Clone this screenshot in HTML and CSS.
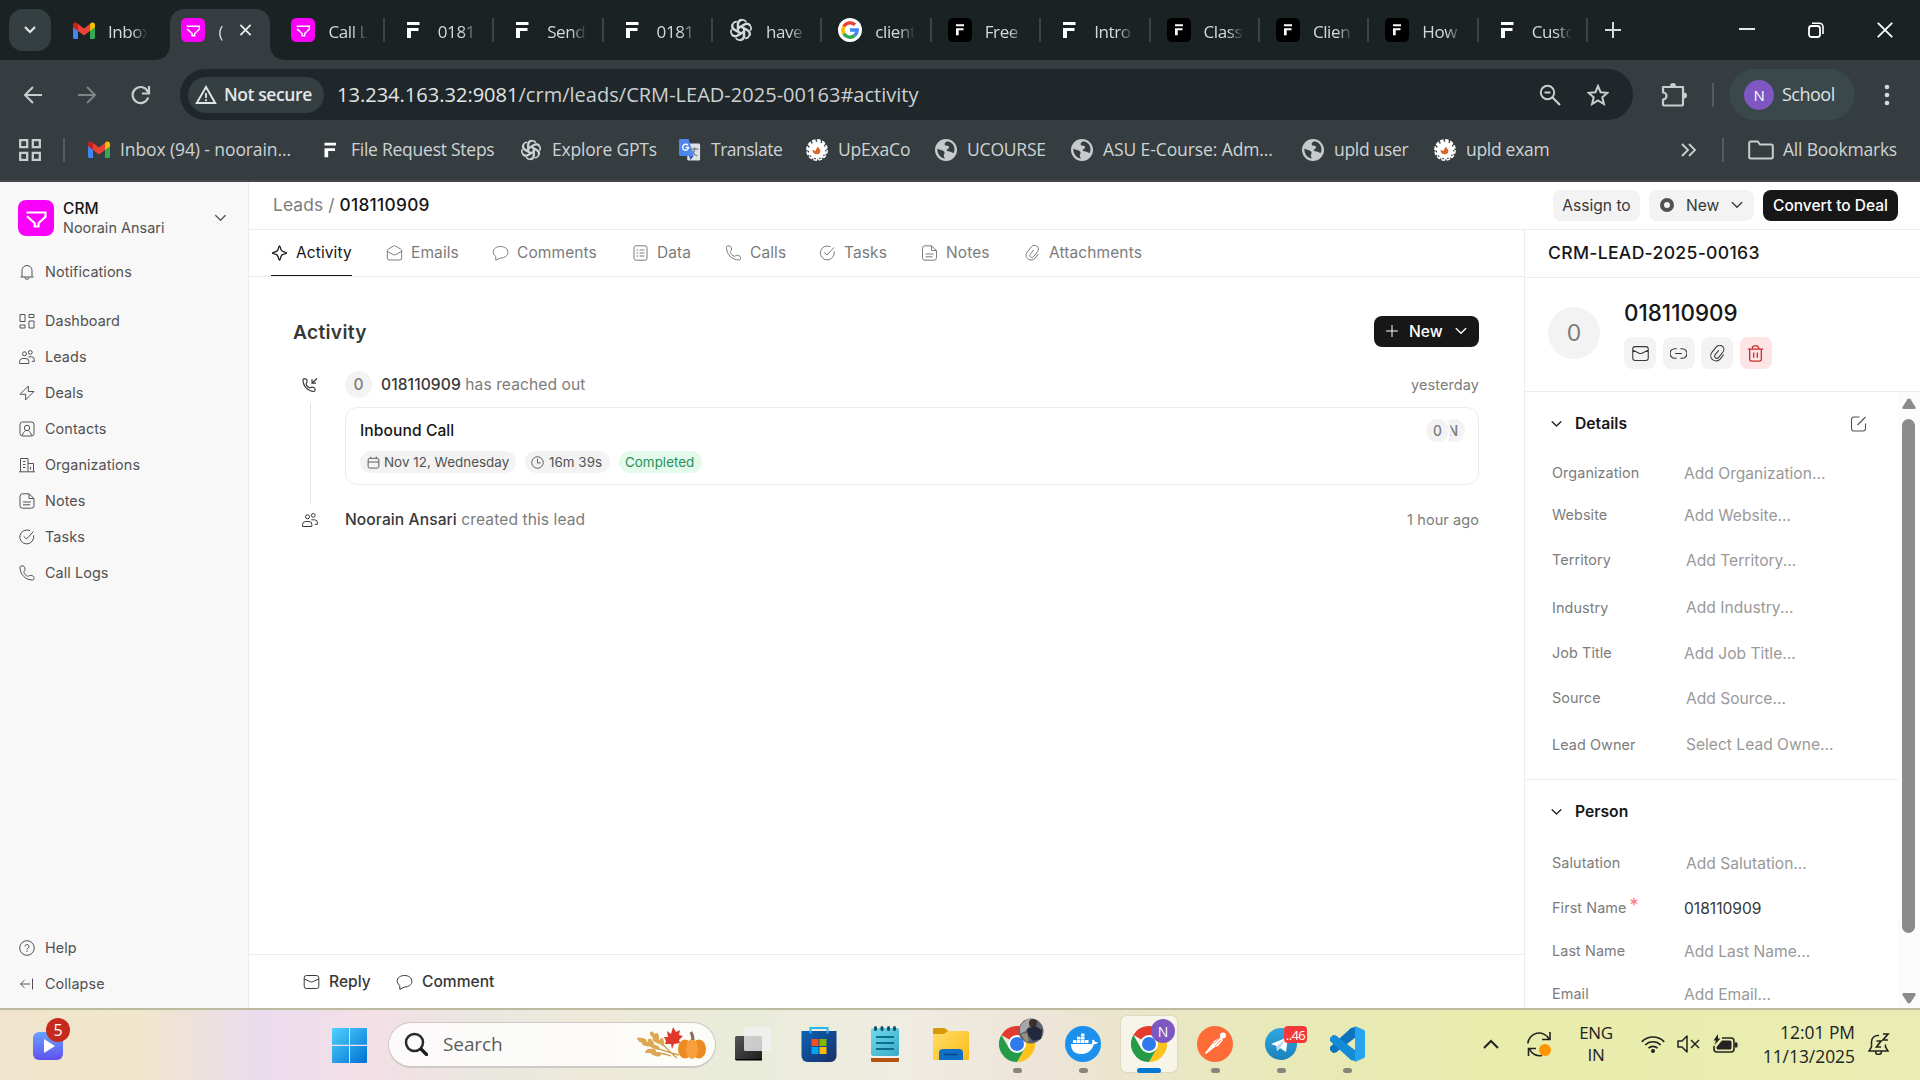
FILE: index.html
```html
<!DOCTYPE html>
<html lang="en">
<head>
<meta charset="utf-8">
<title>018110909 - Lead</title>
<link rel="stylesheet" href="styles.css">
</head>
<body>
<svg class="defs" width="0" height="0" aria-hidden="true">
  <defs>
    <linearGradient id="win" x1="0" y1="0" x2="1" y2="1"><stop offset="0" stop-color="#4fd2ff"/><stop offset="1" stop-color="#0070d2"/></linearGradient>
    <linearGradient id="vid" x1="0" y1="0" x2="0" y2="1"><stop offset="0" stop-color="#6aa2ff"/><stop offset="1" stop-color="#6050ee"/></linearGradient>
    <linearGradient id="store-g" x1="0" y1="0" x2="1" y2="1"><stop offset="0" stop-color="#0a63b8"/><stop offset="1" stop-color="#1b2f66"/></linearGradient>
    <linearGradient id="note-g" x1="0" y1="0" x2="1" y2="1"><stop offset="0" stop-color="#6fdcea"/><stop offset="1" stop-color="#38a9c9"/></linearGradient>
    <linearGradient id="fold-g" x1="0" y1="0" x2="1" y2="1"><stop offset="0" stop-color="#ffdf6b"/><stop offset="1" stop-color="#fcb813"/></linearGradient>
    <linearGradient id="tg-g" x1="0" y1="0" x2="0" y2="1"><stop offset="0" stop-color="#2fa9e0"/><stop offset="1" stop-color="#1b80bb"/></linearGradient>
    <linearGradient id="dark-g" x1="0" y1="0" x2="1" y2="1"><stop offset="0" stop-color="#555"/><stop offset="1" stop-color="#1d1d1d"/></linearGradient>
  </defs>
  <symbol id="gmail" viewBox="0 0 22 17"><path fill="#4285f4" d="M0 3v12.5A1.5 1.5 0 0 0 1.5 17H5V7z"/><path fill="#34a853" d="M22 3v12.500A1.500 1.500 0 0 1 20.500 17H17V7z"/><path fill="#fbbc04" d="M17 2v7l5-3.800V3c0-2.600-3-3.600-5-1z"/><path fill="#c5221f" d="M0 3v2.200L5 9V2C3-.6 0 .4 0 3z"/><path fill="#ea4335" d="M5 9V2l6 4.600L17 2v7l-6 4.600z"/></symbol>
  <symbol id="crm" viewBox="0 0 36 36"><rect width="36" height="36" rx="8" fill="#f900f9"/><path d="M8.500 12.500h19v4.300l-7 6.400v3.300h-3.800v-3.300L9 16.300" fill="none" stroke="#fff" stroke-width="2.200"/></symbol>
  <symbol id="frappe" viewBox="0 0 24 24"><path fill="#fff" d="M6 4h12.500v3H6zM6 10h11.500v3H10v7H6z"/></symbol>
  <symbol id="frappeb" viewBox="0 0 24 24"><rect width="24" height="24" rx="5" fill="#000"/><path fill="#fff" d="M8 6.200h8v2H8zM8 10.300h7.500v2h-4.800v5H8z"/></symbol>
  <symbol id="gpt" viewBox="0 0 24 24"><g fill="none" stroke="currentColor" stroke-width="1.700"><g id="petal"><path d="M9.300 13.500V6.200a4.200 4.200 0 0 1 7.900-2"/><path d="M9.300 9.600l6.400-3.700a4.200 4.200 0 0 1 5.600 1.600"/></g><use href="#petal" transform="rotate(60 12 12)"/><use href="#petal" transform="rotate(120 12 12)"/><use href="#petal" transform="rotate(180 12 12)"/><use href="#petal" transform="rotate(240 12 12)"/><use href="#petal" transform="rotate(300 12 12)"/></g></symbol>
  <symbol id="google" viewBox="0 0 24 24"><circle cx="12" cy="12" r="12" fill="#fff"/><g fill="none" stroke-width="3.400"><path stroke="#ea4335" d="M5.800 8.500A7.200 7.200 0 0 1 17 6.800"/><path stroke="#fbbc05" d="M5.800 15.500a7.200 7.200 0 0 1 0-7"/><path stroke="#34a853" d="M16.800 17.400A7.200 7.200 0 0 1 5.800 15.500"/><path stroke="#4285f4" d="M12 12h7.200a7.200 7.200 0 0 1-2.500 5.400"/></g></symbol>
  <symbol id="globe" viewBox="0 0 22 22"><circle cx="11" cy="11" r="11" fill="#c7cacc"/><path fill="#353d40" d="M12.500 2.300c-2 .8-3.500 2.200-2.600 3.700 1.400 1.300 4.200.2 4.200 2.300 0 1.900-2.300 1.500-2.600 3.200 2.100 1.500 4.600.7 5.800 2.100 1.300 1.600 2.100-.8 2.200-3.400C19.300 6.200 17 3.300 12.500 2.300zM2.400 9.500c2.300 1.900 5 1.300 6.700 2.900 1.500 1.700-.7 3.200-.2 4.900.2 1.100.9 1.800 1.600 2.300C6 19.300 2 15.600 2.400 9.500z"/></symbol>
  <symbol id="translate" viewBox="0 0 24 24"><rect x="9" y="5" width="14" height="18.500" rx="1.500" fill="#dfe2e5"/><path d="M13 11h8M17 9v2c0 3-2 5.500-4.500 7M14.500 13c1 2.500 3 4.500 5.500 5.500" stroke="#6f7b82" stroke-width="1.300" fill="none"/><path fill="#4e88ee" d="M1.500 0h9l5.500 18.500H1.500A1.500 1.500 0 0 1 0 17V1.500A1.500 1.500 0 0 1 1.500 0z"/><path d="M11 18.500h5L12.500 23z" fill="#3558a8"/><path d="M9.700 6.800A3.300 3.300 0 1 0 10.500 9.300H7.300" stroke="#fff" stroke-width="1.500" fill="none"/></symbol>
  <symbol id="upexa" viewBox="0 0 22 22"><circle cx="11" cy="11" r="9.600" fill="#fff"/><circle cx="11" cy="11" r="9.600" fill="none" stroke="#fff" stroke-width="2.600" stroke-dasharray="3.500 1.500"/><circle cx="11" cy="11" r="8.800" fill="none" stroke="#222" stroke-width="1.200" stroke-dasharray="1.500 3.500"/><path fill="#d9672b" d="M6.500 11c1.800 0 2.300 1 3.300 1 0-1.600.7-2.800 2.400-4.400 0 1.700 2.500 2.500 2.100 4.900-.4 2-1.700 2.800-3.400 2.800-2.400 0-4.400-1.600-4.400-4.300z"/></symbol>
  <symbol id="chev" viewBox="0 0 12 8"><path d="M1.200 1.500L6 6.200l4.800-4.700" fill="none" stroke="currentColor" stroke-width="1.300" stroke-linecap="round" stroke-linejoin="round"/></symbol>
  <symbol id="bell" viewBox="0 0 16 16"><path d="M1.500 13h13M3 13V6.500a5 5 0 0 1 10 0V13M6 13.300a2 2 0 0 0 4 0" fill="none" stroke="currentColor"/></symbol>
  <symbol id="dash" viewBox="0 0 16 16"><path d="M1 1.500h5v7H1zM10 1.500h5v3h-5zM10 8h5v7h-5zM1 12h5v3H1z" fill="none" stroke="currentColor"/></symbol>
  <symbol id="people" viewBox="0 0 16 16"><g fill="none" stroke="currentColor"><circle cx="5.500" cy="4.800" r="2"/><circle cx="11.300" cy="3.400" r="1.900"/><path d="M.6 14.500v-2A3 3 0 0 1 3.600 9.500h3.300a3 3 0 0 1 3 3v2zM9.300 7.800h3.200a2.900 2.900 0 0 1 2.900 2.900v1.600h-2.600"/></g></symbol>
  <symbol id="bolt" viewBox="0 0 16 16"><path d="M9.300 1L1 9.300h5.800L6.500 15 15 6.500H9.300z" fill="none" stroke="currentColor" stroke-linejoin="round"/></symbol>
  <symbol id="contact" viewBox="0 0 16 16"><g fill="none" stroke="currentColor"><rect x="1" y="1" width="14" height="14" rx="2.500"/><circle cx="8" cy="7" r="2.700"/><path d="M3.500 14.500c.3-2.300 1.400-3.700 3-4.700M12.500 14.500c-.3-2.300-1.400-3.700-3-4.700"/></g></symbol>
  <symbol id="org" viewBox="0 0 16 16"><path d="M0 14.800h16M1.500 14.500v-13H9v13M9 6.500h5.500v8M4 4.500h2.500M4 7.500h2.500M4 10.500h2.500M11.500 10v2.500" fill="none" stroke="currentColor"/></symbol>
  <symbol id="note" viewBox="0 0 16 16"><path d="M10 .8H3.500a2.500 2.500 0 0 0-2.500 2.500v9.400a2.500 2.500 0 0 0 2.500 2.500h9a2.500 2.500 0 0 0 2.500-2.500V5.500zM10 1v4.500h5M4 9h8M4 11.800h7" fill="none" stroke="currentColor"/></symbol>
  <symbol id="task" viewBox="0 0 16 16"><path d="M14.700 6.700A7 7 0 1 1 10.600 1.500M5 7.700L7.600 10l6.600-7.300" fill="none" stroke="currentColor" stroke-linecap="round"/></symbol>
  <symbol id="phone" viewBox="0 0 16 16"><path d="M2 1h2.200c1.600 0 2 3 1.700 4.200-.3.900-1.200 1.300-1 2.200.5 1.700 2 3.200 3.700 3.800.9.300 1.500-.7 2.400-.8 1.400-.2 4 .6 4 2v1.400c0 .8-.6 1.200-1.400 1.200C6.500 15 1 9.500 1 2.500 1 1.600 1.200 1 2 1z" fill="none" stroke="currentColor"/></symbol>
  <symbol id="callin" viewBox="0 0 16 16"><path d="M1.800 1.800h1.700c1.400 0 1.700 2.500 1.400 3.500-.2.800-1 1.100-.8 1.900.5 1.600 2 3 3.500 3.600.8.200 1.300-.6 2-.7 1.300-.2 3.400.5 3.400 1.700v1.200c0 .9-.5 1.500-1.300 1.500C6.500 14.500 1 9.500 1 3c0-.7.200-1.200.8-1.200zM15 1.500l-5 4.700M10 2.200v4h4" fill="none" stroke="currentColor" stroke-width="1.200"/></symbol>
  <symbol id="help" viewBox="0 0 16 16"><g fill="none" stroke="currentColor"><circle cx="8" cy="8" r="7.300"/><path d="M6 6.500a2 2 0 1 1 3 1.700c-.7.400-1 .7-1 1.500M8 10.800v1.200"/></g></symbol>
  <symbol id="collapse" viewBox="0 0 16 16"><path d="M13.500 2.500v11M11 8H1.500M5.500 4.200L1.500 8l4 3.800" fill="none" stroke="currentColor"/></symbol>
  <symbol id="spark" viewBox="0 0 16 16"><path d="M8 .9c.9 0 1 4 2.200 4.900S15.100 7.100 15.100 8s-3.700 1-4.900 2.200S8.900 15.100 8 15.100s-1-3.700-2.200-4.900S.9 8.900.9 8s3.700-1 4.900-2.200S7.100.9 8 .9z" fill="none" stroke="currentColor" stroke-width="1.300"/></symbol>
  <symbol id="mailopen" viewBox="0 0 16 16"><path d="M.8 6c0-1 .4-1.500 1.200-2l4.500-2.700c1-.6 2-.6 3 0L14 4c.8.500 1.200 1 1.200 2v7a2 2 0 0 1-2 2H2.800a2 2 0 0 1-2-2zM1 6.500l5.500 3c1 .5 2 .5 3 0l5.500-3" fill="none" stroke="currentColor"/></symbol>
  <symbol id="mail" viewBox="0 0 16 16"><path d="M3 1.500h10a2.300 2.300 0 0 1 2.300 2.300v8.400a2.300 2.300 0 0 1-2.300 2.300H3A2.300 2.300 0 0 1 .7 12.200V3.800A2.300 2.300 0 0 1 3 1.500zM.9 5l5.800 2.700c.9.400 1.700.4 2.600 0L15.100 5" fill="none" stroke="currentColor"/></symbol>
  <symbol id="comment" viewBox="0 0 16 16"><path d="M3.300 11.500A6 6 0 0 1 .6 7.300C.6 4 3.700 1.500 8 1.500s7.400 2.500 7.400 5.800S12.300 13 8 13L3.300 15.300z" fill="none" stroke="currentColor" stroke-linejoin="round"/></symbol>
  <symbol id="data" viewBox="0 0 16 16"><path d="M3.500.8h9a2 2 0 0 1 2 2v10.400a2 2 0 0 1-2 2h-9a2 2 0 0 1-2-2V2.800a2 2 0 0 1 2-2zM4 5h1.500M4 8h1.500M4 11h1.500M7 5h5M7 8h5M7 11h5" fill="none" stroke="currentColor"/></symbol>
  <symbol id="clip" viewBox="0 0 16 16"><path d="M13.500 9.300l-3 4C9 15.200 6 15.600 3.700 14 1.400 12.300 1 9.300 2.700 7l4-5c1.500-1.800 4-2.100 5.700-.9 1.700 1.300 2 3.700.7 5.500l-4 5c-.8 1-2 1.200-3 .5s-1.100-2-.3-3L9 5.300" fill="none" stroke="currentColor" stroke-linecap="round"/></symbol>
  <symbol id="link" viewBox="0 0 18 16"><path d="M7 3H5a5 5 0 0 0 0 10h2M11 3h2a5 5 0 0 1 0 10h-2M5.500 8h7" fill="none" stroke="currentColor" stroke-width="1.200"/></symbol>
  <symbol id="trash" viewBox="0 0 16 16"><path d="M.8 3.800h14.400M2.500 3.800v9.400a2 2 0 0 0 2 2h7a2 2 0 0 0 2-2V3.800M5 3.500C5 1.500 6 .8 7 .8h2c1 0 2 .7 2 2.700M6.300 7v5M9.700 7v5" fill="none" stroke="currentColor" stroke-width="1.200"/></symbol>
  <symbol id="edit" viewBox="0 0 16 16"><path d="M9 1H3.500A2.500 2.500 0 0 0 1 3.500v9A2.500 2.500 0 0 0 3.500 15h9a2.500 2.500 0 0 0 2.500-2.500V7.500M7 9l8-8" fill="none" stroke="currentColor" stroke-width="1.100"/></symbol>
  <symbol id="cal" viewBox="0 0 14 14"><path d="M3 2.500h8A1.800 1.800 0 0 1 12.800 4.300v6.900A1.800 1.800 0 0 1 11 13H3a1.800 1.800 0 0 1-1.800-1.800V4.300A1.800 1.800 0 0 1 3 2.500zM1.200 6.500h11.600M4 .8v2M10 .8v2" fill="none" stroke="currentColor"/></symbol>
  <symbol id="clock" viewBox="0 0 14 14"><path d="M7 3v4.500h3.500" fill="none" stroke="currentColor"/><circle cx="7" cy="7" r="6.200" fill="none" stroke="currentColor"/></symbol>
  <symbol id="chrome" viewBox="0 0 36 36"><path fill="#e33b2e" d="M18 18L2.400 9A18 18 0 0 1 33.600 9z"/><path fill="#fcc31e" d="M18 9h15.600A18 18 0 0 1 18 36l7.800-13.500z"/><path fill="#259a47" d="M2.400 9A18 18 0 0 0 18 36l7.800-13.500L18 25l-7.800-2.500z"/><circle cx="18" cy="18" r="9" fill="#fff"/><circle cx="18" cy="18" r="7" fill="#2f7bee"/></symbol>
</svg>

<div class="screen">
  <header class="browser">
    <div class="tabstrip">
      <button class="tabmenu"><svg width="14" height="10" viewBox="0 0 14 10"><path d="M2 2l5 5 5-5" fill="none" stroke="#e3e6e7" stroke-width="2.200"/></svg></button>
      <div class="btab"><svg class="gm"><use href="#gmail"/></svg><span>Inbox</span></div>
      <div class="btab active"><svg><use href="#crm"/></svg><span>(</span><svg class="x" viewBox="0 0 14 14"><path d="M1.500 1.500l11 11M12.500 1.500l-11 11" stroke="#e8eaed" stroke-width="2"/></svg></div>
      <div class="btab sep"><svg><use href="#crm"/></svg><span>Call L</span></div>
      <div class="btab sep"><svg><use href="#frappe"/></svg><span>0181</span></div>
      <div class="btab sep"><svg><use href="#frappe"/></svg><span>Send</span></div>
      <div class="btab sep"><svg><use href="#frappe"/></svg><span>0181</span></div>
      <div class="btab sep"><svg><use href="#gpt"/></svg><span>have</span></div>
      <div class="btab sep"><svg><use href="#google"/></svg><span>client</span></div>
      <div class="btab sep"><svg><use href="#frappeb"/></svg><span>Free</span></div>
      <div class="btab sep"><svg><use href="#frappe"/></svg><span>Intro</span></div>
      <div class="btab sep"><svg><use href="#frappeb"/></svg><span>Class</span></div>
      <div class="btab sep"><svg><use href="#frappeb"/></svg><span>Clien</span></div>
      <div class="btab sep"><svg><use href="#frappeb"/></svg><span>How</span></div>
      <div class="btab sep"><svg><use href="#frappe"/></svg><span>Custo</span></div>
      <svg class="plus" viewBox="0 0 16 16"><path d="M8 0v16M0 8h16" stroke="#d5d9da" stroke-width="2"/></svg>
      <div class="wincontrols">
        <svg viewBox="0 0 16 16"><path d="M0 7h16" stroke="#fff" stroke-width="1.800"/></svg>
        <svg viewBox="0 0 16 16"><rect x="1" y="4" width="11" height="11" rx="2.500" fill="none" stroke="#fff" stroke-width="1.800"/><path d="M4 1.200h7.500A3.500 3.500 0 0 1 15 4.700V12" fill="none" stroke="#fff" stroke-width="1.600"/></svg>
        <svg viewBox="0 0 16 16"><path d="M.8 .8l14.400 14.400M15.200 .8L.8 15.200" stroke="#fff" stroke-width="1.800"/></svg>
      </div>
    </div>
    <div class="toolbar">
      <svg class="nav" viewBox="0 0 20 20"><path d="M19 10H2M10 2L2 10l8 8" fill="none" stroke="#c9cdce" stroke-width="2"/></svg>
      <svg class="nav" viewBox="0 0 20 20"><path d="M1 10h17M10 2l8 8-8 8" fill="none" stroke="#7e8587" stroke-width="2"/></svg>
      <svg class="nav" viewBox="0 0 20 20"><path d="M17.200 12.500A8 8 0 1 1 17 7M18 1v7.500h-7" fill="none" stroke="#c9cdce" stroke-width="2.200"/></svg>
      <div class="omnibox">
        <div class="chip"><svg width="22" height="20" viewBox="0 0 22 20"><path d="M11 2L1.800 18h18.400z" fill="none" stroke="#e3e6e7" stroke-width="1.900"/><path d="M11 8v5M11 14.300v2" stroke="#e3e6e7" stroke-width="1.800"/></svg><span>Not secure</span></div>
        <span class="url">13.234.163.32:9081<i>/crm/leads/CRM-LEAD-2025-00163#activity</i></span>
        <svg class="omi" viewBox="0 0 22 22"><circle cx="8.500" cy="8.500" r="6.700" fill="none" stroke="#c9cdce" stroke-width="2"/><path d="M13.300 13.300L21 21M5.500 8.500h6" stroke="#c9cdce" stroke-width="2.200"/></svg>
        <svg class="omi" viewBox="0 0 22 22"><path d="M11 2l2.600 6.200 6.900.6-5.200 4.500 1.600 6.700L11 16.400 5.100 20l1.600-6.700L1.500 8.800l6.900-.6z" fill="none" stroke="#c9cdce" stroke-width="2"/></svg>
      </div>
      <svg class="puzzle" viewBox="0 0 26 26"><path d="M2 5h20v17a1.500 1.500 0 0 1-1.500 1.500h-17A1.500 1.500 0 0 1 2 22v-4.500a3.500 3.500 0 0 0 0-7z" fill="none" stroke="#c9cdce" stroke-width="2.200" stroke-linejoin="round"/><path d="M9 4a3 3 0 0 1 6 0zM23 10.500a3 3 0 0 1 0 6z" fill="#c9cdce"/></svg>
      <i class="vsep"></i>
      <div class="profile"><b>N</b><span>School</span></div>
      <svg class="dots" viewBox="0 0 6 22"><g fill="#d5d9da"><circle cx="3" cy="3" r="2.300"/><circle cx="3" cy="11" r="2.300"/><circle cx="3" cy="19" r="2.300"/></g></svg>
    </div>
    <div class="bookmarks">
      <svg class="grid4" viewBox="0 0 22 22"><path d="M1.200 1.200h7v7h-7zM13.800 1.200h7v7h-7zM1.200 13.800h7v7h-7zM13.800 13.800h7v7h-7z" fill="none" stroke="#c9cdce" stroke-width="2.300"/></svg>
      <i class="vsep"></i>
      <div class="bm t1"><svg class="gm"><use href="#gmail"/></svg><span>Inbox (94) - noorain...</span></div>
      <div class="bm t2"><svg><use href="#frappe"/></svg><span>File Request Steps</span></div>
      <div class="bm t3"><svg><use href="#gpt"/></svg><span>Explore GPTs</span></div>
      <div class="bm t4"><svg><use href="#translate"/></svg><span>Translate</span></div>
      <div class="bm t5"><svg><use href="#upexa"/></svg><span>UpExaCo</span></div>
      <div class="bm t6"><svg><use href="#globe"/></svg><span>UCOURSE</span></div>
      <div class="bm t7"><svg><use href="#globe"/></svg><span>ASU E-Course: Adm...</span></div>
      <div class="bm t8"><svg><use href="#globe"/></svg><span>upld user</span></div>
      <div class="bm t9"><svg><use href="#upexa"/></svg><span>upld exam</span></div>
      <svg class="more" viewBox="0 0 15 14"><path d="M1 1l6 6-6 6M8 1l6 6-6 6" fill="none" stroke="#c9cdce" stroke-width="1.900"/></svg>
      <i class="vsep"></i>
      <svg class="folder" viewBox="0 0 26 20"><path d="M1.200 17V3A1.500 1.500 0 0 1 2.700 1.500h7L12 4.500h11.300A1.500 1.500 0 0 1 24.800 6v11a1.500 1.500 0 0 1-1.500 1.500H2.700A1.500 1.500 0 0 1 1.200 17z" fill="none" stroke="#c9cdce" stroke-width="2"/></svg>
      <span class="all">All Bookmarks</span>
    </div>
  </header>

  <div class="app">
    <aside class="sidebar">
      <div class="brand"><svg><use href="#crm"/></svg><div><strong>CRM</strong><span>Noorain Ansari</span></div><svg class="chev"><use href="#chev"/></svg></div>
      <nav>
        <a class="first"><svg><use href="#bell"/></svg>Notifications</a>
        <a><svg><use href="#dash"/></svg>Dashboard</a>
        <a><svg><use href="#people"/></svg>Leads</a>
        <a><svg><use href="#bolt"/></svg>Deals</a>
        <a><svg><use href="#contact"/></svg>Contacts</a>
        <a><svg><use href="#org"/></svg>Organizations</a>
        <a><svg><use href="#note"/></svg>Notes</a>
        <a><svg><use href="#task"/></svg>Tasks</a>
        <a><svg><use href="#phone"/></svg>Call Logs</a>
      </nav>
      <nav class="foot">
        <a><svg><use href="#help"/></svg>Help</a>
        <a><svg><use href="#collapse"/></svg>Collapse</a>
      </nav>
    </aside>
    <div class="page">
      <div class="pagehead">
        <div class="crumbs"><span>Leads</span><em>/</em><b>018110909</b></div>
        <button class="btn assign">Assign to</button>
        <button class="btn status"><i></i><span>New</span><svg><use href="#chev"/></svg></button>
        <button class="btn dark convert">Convert to Deal</button>
      </div>
      <div class="cols">
        <main>
          <div class="tabs">
            <a class="on"><svg><use href="#spark"/></svg>Activity</a>
            <a><svg><use href="#mailopen"/></svg>Emails</a>
            <a><svg><use href="#comment"/></svg>Comments</a>
            <a><svg><use href="#data"/></svg>Data</a>
            <a><svg><use href="#phone"/></svg>Calls</a>
            <a><svg><use href="#task"/></svg>Tasks</a>
            <a><svg><use href="#note"/></svg>Notes</a>
            <a><svg><use href="#clip"/></svg>Attachments</a>
          </div>
          <div class="acthead"><h2>Activity</h2><button class="btn dark new"><svg class="pl" viewBox="0 0 12 12"><path d="M6 0v12M0 6h12" stroke="#fff"/></svg><span>New</span><svg class="cv"><use href="#chev"/></svg></button></div>
          <div class="feed">
            <div class="rail"><svg><use href="#callin"/></svg><i></i></div>
            <div class="event">
              <div class="line"><b class="av">0</b><span><strong>018110909</strong> has reached out</span><time>yesterday</time></div>
              <div class="card">
                <div class="cardtop"><span>Inbound Call</span><div class="avs"><b>0</b><b>N</b></div></div>
                <div class="badges">
                  <span class="d"><svg><use href="#cal"/></svg>Nov 12, Wednesday</span>
                  <span class="l"><svg><use href="#clock"/></svg>16m 39s</span>
                  <span class="ok">Completed</span>
                </div>
              </div>
            </div>
            <div class="rail r2"><svg><use href="#people"/></svg></div>
            <div class="event"><div class="line"><span><strong>Noorain Ansari</strong> created this lead</span><time>1 hour ago</time></div></div>
          </div>
          <div class="composer"><a class="rp"><svg><use href="#mail"/></svg>Reply</a><a><svg><use href="#comment"/></svg>Comment</a></div>
        </main>
        <section class="panel">
          <div class="pid">CRM-LEAD-2025-00163</div>
          <div class="who">
            <b>0</b>
            <div><h3>018110909</h3>
              <div class="acts"><a><svg><use href="#mail"/></svg></a><a><svg class="w"><use href="#link"/></svg></a><a><svg><use href="#clip"/></svg></a><a class="del"><svg><use href="#trash"/></svg></a></div>
            </div>
          </div>
          <div class="scroll">
            <div class="fields">
              <div class="sec"><svg class="cv"><use href="#chev"/></svg><h4>Details</h4><svg class="ed"><use href="#edit"/></svg></div>
              <dl class="details">
                <dt>Organization</dt><dd>Add Organization...</dd>
                <dt>Website</dt><dd>Add Website...</dd>
                <dt>Territory</dt><dd class="in">Add Territory...</dd>
                <dt>Industry</dt><dd class="in">Add Industry...</dd>
                <dt>Job Title</dt><dd>Add Job Title...</dd>
                <dt>Source</dt><dd class="in">Add Source...</dd>
                <dt>Lead Owner</dt><dd class="in">Select Lead Owne...</dd>
              </dl>
              <div class="sec two"><svg class="cv"><use href="#chev"/></svg><h4>Person</h4></div>
              <dl class="person">
                <dt>Salutation</dt><dd class="in">Add Salutation...</dd>
                <dt>First Name<sup>*</sup></dt><dd class="set">018110909</dd>
                <dt>Last Name</dt><dd>Add Last Name...</dd>
                <dt>Email</dt><dd>Add Email...</dd>
              </dl>
            </div>
            <div class="bar"><svg viewBox="0 0 14 11"><path d="M5.500 1.200q1.500-1.500 3 0L13.500 9q.5 2-1 2h-11q-1.500 0-1-2z" fill="#8b8b8b"/></svg><i></i><svg class="dn" viewBox="0 0 14 11"><path d="M5.500 9.800q1.500 1.500 3 0L13.500 2q.5-2-1-2h-11q-1.500 0-1 2z" fill="#8b8b8b"/></svg></div>
          </div>
        </section>
      </div>
    </div>
  </div>

  <footer class="taskbar">
    <div class="widget"><svg width="30" height="28" viewBox="0 0 30 28"><rect width="30" height="28" rx="6" fill="url(#vid)"/><path d="M11 7v14l11-7z" fill="#fff"/></svg><b>5</b></div>
    <svg class="start" viewBox="0 0 35 35"><path fill="url(#win)" d="M1 0h16v16.700H0V1a1 1 0 0 1 1-1zM18 0h16a1 1 0 0 1 1 1v15.700H18zM0 18h17v17H1a1 1 0 0 1-1-1zM18 18h17v16a1 1 0 0 1-1 1H18z"/></svg>
    <div class="search"><svg width="24" height="24" viewBox="0 0 24 24"><circle cx="10.500" cy="10.500" r="8.500" fill="none" stroke="#2a2a2a" stroke-width="2.500"/><path d="M17 17l5.500 5.500" stroke="#1c1c1c" stroke-width="3.200" stroke-linecap="round"/></svg><span>Search</span>
      <svg class="harvest" width="70" height="34" viewBox="0 0 70 34"><g stroke="#cf9c4f" fill="none" stroke-width="1.300"><path d="M14 5c8 8 16 18 26 26M2 14c10 4 22 10 40 14M8 25c10 0 18 1 26 4"/></g><g fill="#dda850"><ellipse cx="16" cy="8" rx="4" ry="2" transform="rotate(50 16 8)"/><ellipse cx="20" cy="10" rx="4" ry="2" transform="rotate(80 20 10)"/><ellipse cx="20" cy="14" rx="5" ry="2" transform="rotate(30 20 14)"/><ellipse cx="25" cy="15" rx="4" ry="2" transform="rotate(80 25 15)"/><ellipse cx="5" cy="13" rx="5" ry="2" transform="rotate(15 5 13)"/><ellipse cx="10" cy="17" rx="5" ry="2.200" transform="rotate(10 10 17)"/><ellipse cx="14" cy="15" rx="4" ry="2" transform="rotate(50 14 15)"/><ellipse cx="18" cy="20" rx="5" ry="2" transform="rotate(20 18 20)"/><ellipse cx="14" cy="24" rx="5" ry="2.200"/><ellipse cx="19" cy="27" rx="5" ry="2" transform="rotate(15 19 27)"/></g><path fill="#e0392c" d="M36 0l3 5 4-2-1 5 4 1-4 4 1 3-6 1-2 5-1-5-6 0 1-3-2-4 4 0-1-6 4 3z"/><g fill="#ee8a22"><ellipse cx="48" cy="22" rx="7" ry="9.500"/><ellipse cx="62" cy="22" rx="7" ry="9.500"/><ellipse cx="55" cy="22" rx="6" ry="10" fill="#f7a13c"/></g><path d="M56 13c0-4-1-6-2-8" stroke="#8a6a5a" stroke-width="3" fill="none"/></svg>
    </div>
    <div class="apps">
      <div class="ap"><svg width="36" height="36" viewBox="0 0 36 36"><rect y="10" width="27" height="24" rx="1.500" fill="url(#dark-g)"/><path d="M0 33h27v1.500H1z" fill="#000"/><rect x="9" y="1" width="27" height="24" rx="1.500" fill="#f0f0f0" opacity=".8"/></svg></div>
      <div class="ap"><svg width="36" height="36" viewBox="0 0 36 36"><path d="M.5 5h35v25a6 6 0 0 1-6 6h-23a6 6 0 0 1-6-6z" fill="url(#store-g)"/><path d="M9.500 7.500V2h17v5.500" fill="none" stroke="#28b5ef" stroke-width="2"/><path fill="#f25022" d="M10.500 13h7v7h-7z"/><path fill="#7fba00" d="M18.500 13h7v7h-7z"/><path fill="#00a4ef" d="M10.500 21h7v7h-7z"/><path fill="#ffb900" d="M18.500 21h7v7h-7z"/></svg></div>
      <div class="ap"><svg width="36" height="36" viewBox="0 0 36 36"><path d="M4 32h28v2.500a1.500 1.500 0 0 1-1.500 1.500h-25A1.500 1.500 0 0 1 4 34.500z" fill="#b4530f"/><path d="M4 29h28v3H4z" fill="#f2f2f2"/><rect x="4" y="2" width="28" height="28" rx="2" fill="url(#note-g)"/><path d="M9 11h18M9 17h18M9 23h18" stroke="#0d6d8c" stroke-width="2"/><g fill="#13516b"><rect x="7" width="3" height="5" rx="1.500"/><rect x="13.500" width="3" height="5" rx="1.500"/><rect x="20" width="3" height="5" rx="1.500"/><rect x="26" width="3" height="5" rx="1.500"/></g></svg></div>
      <div class="ap"><svg width="36" height="36" viewBox="0 0 36 36"><path d="M0 3.500A1.500 1.500 0 0 1 1.500 2H11c2 0 3 3 5 3v6H0z" fill="#d99806"/><path d="M0 8h10c3 0 3-3 6-3h18.500A1.500 1.500 0 0 1 36 6.500v26a1.500 1.500 0 0 1-1.500 1.500h-33A1.500 1.500 0 0 1 0 32.500z" fill="url(#fold-g)"/><path d="M6 34v-7a4 4 0 0 1 4-4h16a4 4 0 0 1 4 4v7z" fill="#0f6fc4"/><path d="M11 28.500h14" stroke="#0a4e92" stroke-width="1.800"/></svg></div>
      <div class="ap run"><svg width="36" height="36"><use href="#chrome"/></svg><svg class="photo" viewBox="0 0 26 26"><circle cx="13" cy="13" r="12.500" fill="#5d6370"/><path d="M2 9C5 3 10 0 14 .6l-2 7-5 6-5 2z" fill="#a7a6a8"/><circle cx="15" cy="5" r="4" fill="#3d2f2c"/><path d="M9 11l8-3 7 4-1 9-8 2-5-6z" fill="#22283e"/><path d="M3 16l6-1 2 8-3 1z" fill="#9a8f7a"/></svg></div>
      <div class="ap run"><svg width="36" height="36" viewBox="0 0 36 36"><circle cx="18" cy="18" r="18" fill="#1d90ee"/><path fill="#fff" d="M6 18h20c1.500 0 1.500-2 1-3.500l1.500-1c1 1 1.500 2 1.500 2.500 1.500-.3 2.500 0 3 .6-.8 1.200-2 1.600-4 1.600C26.500 25 22 28 16 28 9 28 6 24 6 18zM8 14h3.500v3H8zM12 14h3.500v3H12zM16 14h3.500v3H16zM20 14h3.500v3H20zM12 10.800h3.500v2.700H12zM16 10.800h3.500v2.700H16zM16 7.600h3.500v2.700H16z"/></svg></div>
      <div class="ap run current"><svg width="36" height="36"><use href="#chrome"/></svg><b class="pn">N</b></div>
      <div class="ap run"><svg width="36" height="36" viewBox="0 0 36 36"><circle cx="18" cy="18" r="18" fill="#ff6c37"/><circle cx="26" cy="9.500" r="3" fill="#fff"/><path d="M24 11l2 3-5 6-3 1-9 7-1-1 7-9 2-3z" fill="#fff"/><path d="M16 18l7-6M18 20l6-6" stroke="#ff6c37" stroke-width=".8"/></svg></div>
      <div class="ap run"><svg width="36" height="36" viewBox="0 0 36 36"><circle cx="18" cy="18" r="16" fill="url(#tg-g)"/><path d="M8 18L25 11l-2 15-6-4-3 3-.5-5z" fill="#fff"/><path d="M13.500 20L22 14l-5 8-3 3z" fill="#b9d7ea"/></svg><b class="cnt">..46</b></div>
      <div class="ap run"><svg width="36" height="36" viewBox="0 0 36 36"><path d="M26 1l-4 1L1 21v3l3 3 3-.5L27 11z" fill="#0b74bd"/><path d="M26 35l-4-1L1 15v-3l3-3 3 .5L27 25z" fill="#138bd6"/><path d="M26 0l9 4a2 2 0 0 1 1 2v24a2 2 0 0 1-1 2l-9 4z" fill="#25a4f1"/></svg></div>
    </div>
    <div class="tray">
      <svg class="up" viewBox="0 0 16 10"><path d="M1 9l7-7 7 7" fill="none" stroke="#222" stroke-width="2"/></svg>
      <svg class="upd" viewBox="0 0 24 26"><path d="M.8 12.500A11.300 11.300 0 0 1 22 8M23 1v7.500h-8M15 24.500A11 11 0 0 1 2.500 18M1.500 25v-7.500H9" fill="none" stroke="#222" stroke-width="1.600"/><circle cx="18" cy="19" r="6" fill="#ff9400"/></svg>
      <div class="lang"><span>ENG</span><span>IN</span></div>
      <svg class="wifi" viewBox="0 0 24 18"><path d="M.8 6.800a15.500 15.500 0 0 1 22.400 0M4.300 10a10.800 10.800 0 0 1 15.400 0M7.500 13.200a6.400 6.400 0 0 1 9 0" fill="none" stroke="#222" stroke-width="1.700"/><circle cx="12" cy="16" r="2" fill="#222"/></svg>
      <svg class="vol" viewBox="0 0 24 18"><path d="M1 6h4l5-5v16l-5-5H1z" fill="none" stroke="#222" stroke-width="1.500" stroke-linejoin="round"/><path d="M14 5l8 8M22 5l-8 8" stroke="#222" stroke-width="1.500"/></svg>
      <svg class="bat" viewBox="0 0 25 20"><path d="M9 4h9a3 3 0 0 1 3 3v8a3 3 0 0 1-3 3H4a3 3 0 0 1-3-3v-3" fill="none" stroke="#222" stroke-width="1.600"/><path d="M9 6.500h8a1.500 1.500 0 0 1 1.500 1.500v6a1.500 1.500 0 0 1-1.500 1.500H5A1.500 1.500 0 0 1 3.500 14v-1zM22 8.500h1.500a1 1 0 0 1 1 1v3a1 1 0 0 1-1 1H22zM5 0L.5 6.500H3L1.500 11 7.500 4.500H5z" fill="#222"/></svg>
      <div class="clock"><span>12:01 PM</span><span>11/13/2025</span></div>
      <svg class="zz" viewBox="0 0 22 22"><path d="M11 2.500C6.500 2 3.500 5 3.500 9v5L1 18h19l-2.500-4v-2.500M7.500 18.500a3 3 0 0 0 6 0" fill="none" stroke="#222" stroke-width="1.500"/><path d="M8.500 8h4.500L8.500 14H13M15 1h5l-5 6h5" fill="none" stroke="#222" stroke-width="1.700"/></svg>
    </div>
  </footer>
</div>
</body>
</html>
```

FILE: styles.css
```css
* { box-sizing: border-box; }
body { margin: 0; background: #fff; overflow: hidden; }
button { border: 0; font: inherit; padding: 0; }
svg { flex: none; display: block; }
i, em { font-style: normal; }
h2, h3, h4, dl, dd, dt { margin: 0; }
.screen { width: 1920px; height: 1080px; display: flex; flex-direction: column; overflow: hidden; }

/* browser chrome */
.browser { height: 182px; flex: none; background: #353d40; border-bottom: 2px solid #42484b; font-family: "Open Sans", "Noto Sans", sans-serif; color: #d5d9da; }
.tabstrip { height: 60px; background: #1a2224; display: flex; align-items: center; padding-left: 9px; }
.tabmenu { width: 42px; height: 42px; border-radius: 14px; background: #353e41; display: flex; align-items: center; justify-content: center; margin-right: 5px; }
.btab { width: 109.4px; height: 42px; display: flex; align-items: center; padding-left: 16px; font-size: 17px; letter-spacing: -.4px; position: relative; }
.btab svg { width: 24px; height: 24px; margin-right: 13px; }
.btab svg.gm, .bm svg.gm { width: 22px; height: 17px; }
.btab:nth-child(2) svg { margin-left: 1px; margin-right: 13px; }
.btab span { width: 40px; overflow: hidden; white-space: nowrap; padding-top: 2px; -webkit-mask-image: linear-gradient(90deg, #000 60%, transparent); mask-image: linear-gradient(90deg, #000 60%, transparent); }
.btab.sep::after { content: ""; position: absolute; right: 0; top: 9px; width: 2px; height: 24px; background: #3a4447; }
.btab.active { height: 51px; align-self: flex-end; width: 100px; margin: 0 5px 0 5px; border-radius: 14px 14px 0 0; background: #353d40; padding: 0 0 9px 11px; }
.btab.active::before { content: ""; position: absolute; left: -14px; right: -14px; bottom: 0; height: 14px; background: radial-gradient(circle at 0 0, transparent 13.5px, #353d40 14px) left / 14px 14px no-repeat, radial-gradient(circle at 100% 0, transparent 13.5px, #353d40 14px) right / 14px 14px no-repeat; }
.btab.active span { width: 21px; }
.btab.active svg.x { width: 13px; height: 14px; margin: 0; }
.plus { width: 16px; height: 16px; margin-left: 17px; }
.wincontrols { margin-left: auto; display: flex; gap: 53px; padding-right: 27px; }
.wincontrols svg { width: 16px; height: 16px; }
.toolbar { height: 69px; display: flex; align-items: center; padding-left: 23px; }
.nav { width: 20px; height: 20px; margin-right: 34px; }
.nav:nth-child(3) { margin-right: 29px; }
.omnibox { width: 1453px; height: 51px; border-radius: 26px; background: #1f272a; display: flex; align-items: center; padding: 0 24px 0 8px; }
.chip { width: 136px; height: 36px; border-radius: 18px; background: #353e41; display: flex; align-items: center; gap: 7px; padding-left: 7px; font-weight: 600; font-size: 17.5px; letter-spacing: -.4px; color: #e3e6e7; }
.chip span { margin-top: -1px; }
.url { margin-left: 13px; margin-right: auto; font-size: 20px; letter-spacing: .02px; color: #e3e6e7; white-space: nowrap; }
.url i { color: #ccd0d1; }
.omi { width: 22px; height: 22px; margin-left: 26px; }
.puzzle { width: 26px; height: 26px; margin-left: 28px; }
.vsep { width: 2px; height: 24px; background: #535c5f; }
.toolbar .vsep { margin-left: 25px; }
.profile { margin-left: 15px; width: 126px; height: 51px; border-radius: 26px; background: #3a484b; display: flex; align-items: center; gap: 8px; padding-left: 15px; font-size: 18px; letter-spacing: -.5px; color: #dfe3e4; }
.profile span { margin-top: -1px; }
.profile b { width: 30px; height: 30px; border-radius: 50%; background: #7e57c2; display: grid; place-items: center; font-size: 15px; font-weight: 400; color: #fff; }
.dots { width: 6px; height: 22px; margin-left: 29px; }
.bookmarks { height: 41px; display: flex; align-items: center; padding-left: 19px; font-size: 17.5px; letter-spacing: -.2px; white-space: nowrap; color: #cfd3d4; }
.bookmarks span { margin-top: -1px; }
.grid4 { width: 22px; height: 22px; margin-right: 22px; }
.bm { display: grid; grid-template-columns: 32px auto; align-items: center; justify-content: start; }
.bm svg { width: 22px; height: 22px; }
.bm.t1 { margin-left: 23px; width: 231px; letter-spacing: -.1px; }
.bm.t2 { width: 201px; letter-spacing: -.25px; }
.bm.t3 { width: 159px; }
.bm.t4 { width: 127px; letter-spacing: -.5px; }
.bm.t5 { width: 129px; }
.bm.t6 { width: 136px; }
.bm.t7 { width: 231px; letter-spacing: -.1px; }
.bm.t8 { width: 132px; letter-spacing: -.3px; }
.bm.t9 { width: 247px; letter-spacing: -.3px; }
.more { width: 15px; height: 14px; margin-right: 26px; }
.folder { width: 26px; height: 20px; margin: 0 9px 0 24px; }

/* application */
.app { height: 826px; display: flex; font-family: Inter, sans-serif; color: #171717; }
.sidebar { width: 249px; background: #f8f8f8; border-right: 1px solid #ededed; display: flex; flex-direction: column; }
.brand { display: flex; align-items: center; padding: 18px 21px 0 18px; height: 54px; }
.brand > svg:first-child { width: 36px; height: 36px; margin-right: 9px; }
.brand div { flex: 1; display: flex; flex-direction: column; font-size: 14.4px; letter-spacing: .05px; line-height: 19px; color: #525252; }
.brand strong { font-weight: 500; font-size: 15.5px; color: #171717; }
.brand .chev { width: 13px; height: 8px; color: #555; }
.sidebar nav { padding-top: 17px; }
.sidebar nav a { height: 36px; display: flex; align-items: center; gap: 10px; padding-left: 19px; font-size: 14.4px; letter-spacing: .08px; color: #525252; }
.sidebar nav a svg { width: 16px; height: 16px; position: relative; top: 1px; }
.sidebar nav a.first { margin-bottom: 13px; }
.sidebar nav.foot { margin-top: auto; padding: 0 0 7px; }
.page { flex: 1; display: flex; flex-direction: column; min-width: 0; }
.pagehead { height: 48px; flex: none; border-bottom: 1px solid #ededed; display: flex; align-items: center; padding: 0 22px 1px 24px; }
.crumbs { flex: 1; display: flex; gap: 6px; font-size: 17.3px; letter-spacing: .15px; color: #7c7c7c; margin-top: -1px; }
.crumbs em { margin: 0 -1px 0 -1px; }
.crumbs b { font-weight: 500; color: #171717; letter-spacing: .28px; }
.btn { height: 31px; border-radius: 8px; background: #f3f3f3; color: #383838; font-size: 15.6px; margin-left: 9px; white-space: nowrap; }
.btn.dark { background: #171717; color: #fff; font-weight: 500; }
.assign { width: 87px; }
.status { width: 105px; display: flex; align-items: center; padding: 0 12px 0 11px; gap: 12px; }
.status i { flex: none; width: 14px; height: 14px; border-radius: 50%; border: 4px solid #525252; }
.status span { flex: 1; text-align: left; }
.status svg { width: 12px; height: 8px; }
.btn.convert { width: 135px; font-size: 15.5px; }
.cols { flex: 1; display: flex; min-height: 0; }
main { width: 1275px; display: flex; flex-direction: column; }
.tabs { height: 47px; flex: none; border-bottom: 1px solid #ededed; display: grid; grid-template-columns: 115px 106px 140px 93px 94px 102px 103px auto; padding-left: 22px; font-size: 15.5px; letter-spacing: .1px; color: #7c7c7c; }
.tabs a { display: flex; align-items: center; gap: 8px; padding-bottom: 1px; height: 46px; justify-self: start; }
.tabs svg { width: 17px; height: 16px; }
.tabs a.on { color: #171717; border-bottom: 1px solid #171717; padding-bottom: 0; }
.acthead { height: 90px; flex: none; display: flex; justify-content: space-between; padding: 39px 45px 0 44px; }
h2 { font-size: 19.2px; font-weight: 600; line-height: 32px; color: #383838; letter-spacing: .3px; }
.new { width: 105px; display: flex; align-items: center; padding: 0 12px 1px; margin: 0; }
.new span { margin: 0 12px 0 11px; }
.new .pl { width: 12px; height: 12px; }
.new .cv { width: 12px; height: 8px; margin-left: auto; }
.feed { flex: 1; display: grid; grid-template-columns: 51px 1fr; grid-template-rows: 135px 40px; padding: 4px 45px 0 45px; font-size: 15.6px; letter-spacing: .08px; color: #7c7c7c; }
.rail { display: flex; flex-direction: column; align-items: center; width: 32px; padding-top: 6px; gap: 10px; }
.rail svg { width: 16px; height: 16px; color: #383838; }
.rail i { width: 1px; height: 101px; background: #e2e2e2; }
.line { display: flex; align-items: center; height: 27px; }
.line strong { color: #383838; font-weight: 500; }
.line time { margin-left: auto; font-size: 14.5px; }
.av { width: 27px; height: 27px; border-radius: 50%; background: #f3f3f3; display: grid; place-items: center; font-weight: 500; margin-right: 9px; }
.card { margin-top: 9px; height: 78px; border: 1px solid #ededed; border-radius: 12px; padding: 11px 14px 0 14px; }
.cardtop { display: flex; justify-content: space-between; align-items: center; height: 23px; color: #171717; font-weight: 500; }
.avs { display: flex; flex-direction: row; margin-right: -1px; }
.avs b { width: 23px; height: 23px; border-radius: 50%; background: #f3f3f3; display: grid; place-items: center; font-size: 13.8px; font-weight: 500; color: #7c7c7c; }
.avs b:first-child { box-shadow: 0 0 0 2px #fff; z-index: 1; }
.avs b + b { margin-left: -7px; padding-right: 1px; }
.badges { display: flex; gap: 9px; margin-top: 9px; font-size: 13.4px; letter-spacing: .03px; color: #525252; }
.badges span { height: 22px; border-radius: 11px; background: #f3f3f3; display: flex; align-items: center; gap: 4px; padding-left: 7px; white-space: nowrap; }
.badges svg { width: 13px; height: 13px; }
.badges .d { width: 156px; }
.badges .l { width: 85px; padding-left: 6px; gap: 5px; }
.badges .ok { width: 83px; padding-left: 6px; background: #e4faeb; color: #278f5e; }
.composer { height: 54px; flex: none; border-top: 1px solid #ededed; display: flex; align-items: center; padding: 0 0 0 54px; font-size: 15.6px; color: #383838; font-weight: 500; }
.composer a { display: flex; align-items: center; gap: 9px; }
.composer svg { width: 17px; height: 16px; }
.composer .rp { width: 93px; }

/* lead side panel */
.panel { flex: 1; border-left: 1px solid #ededed; display: flex; flex-direction: column; min-width: 0; }
.pid { height: 48px; flex: none; border-bottom: 1px solid #ededed; padding-left: 23px; font-size: 17.6px; letter-spacing: .3px; font-weight: 500; line-height: 46px; }
.who { height: 114px; flex: none; border-bottom: 1px solid #ededed; display: flex; padding: 29px 0 0 23px; }
.who > b { width: 52px; height: 52px; border-radius: 50%; background: #f3f3f3; color: #7c7c7c; font-weight: 400; font-size: 23px; display: grid; place-items: center; margin-right: 24px; }
.who h3 { font-size: 22.4px; font-weight: 500; line-height: 27px; margin-top: -8px; }
.acts { display: flex; gap: 6.5px; margin-top: 11px; }
.acts a { width: 32px; height: 32px; border-radius: 8px; background: #f3f3f3; color: #383838; display: grid; place-items: center; }
.acts svg { width: 17px; height: 17px; }
.acts .del { background: #fee5e5; color: #cc2929; }
.scroll { flex: 1; display: flex; min-height: 0; }
.fields { width: 373px; }
.sec { height: 60px; display: flex; align-items: center; padding: 3px 31px 0 26px; }
.sec .cv { width: 11px; height: 8px; margin-right: 13px; }
.sec h4 { font-size: 15.7px; font-weight: 600; flex: 1; }
.sec .ed { width: 17px; height: 16px; color: #525252; }
.details, .person { display: grid; grid-template-columns: 132px 1fr; padding-left: 27px; align-items: center; }
.details { grid-template-rows: 42px 42px 48px 47px 44px 46px 47px; border-bottom: 1px solid #ededed; padding-bottom: 11px; height: 328px; }
.person { grid-template-rows: 46px 44px 42px 44px; }
.two { padding-top: 3px; }
dt { font-size: 14.4px; letter-spacing: .08px; color: #7c7c7c; margin-top: -1px; white-space: nowrap; }
dt sup { color: #f77; margin-left: 3px; font-size: 18px; line-height: 0; vertical-align: 1px; }
dd { font-size: 15.6px; color: #999; white-space: nowrap; }
dd.in { padding-left: 2px; }
dd.set { color: #383838; }
.bar { flex: 1; background: #fcfcfc; display: flex; flex-direction: column; align-items: center; padding: 6px 1px 0 0; }
.bar svg { width: 14px; height: 11px; }
.bar i { width: 13px; height: 514px; border-radius: 7px; background: #8b8b8b; margin: 10px 0 60px; }

/* windows taskbar */
.taskbar { height: 72px; border-top: 2px solid #bcbba0; display: flex; align-items: center; position: relative; font-family: "Open Sans", "Noto Sans", sans-serif; color: #222; background: linear-gradient(90deg, #f0e5cc 0, #f0e6cc 140px, #ebdcee 260px, #f3dfe6 370px, #e9e8e0 490px, #eeead9 600px, #e9ecd9 730px, #efece1 900px, #eee5da 1030px, #ebe5ce 1110px, #e8e9ba 1260px, #e8ecab 1500px, #e9edb2 1920px); }
.widget { position: relative; margin: 1px 0 0 33px; width: 30px; }
.widget b { position: absolute; left: 13px; top: -14px; width: 24px; height: 24px; border-radius: 50%; background: #c42b1c; color: #fff; font-weight: 400; font-size: 16px; display: grid; place-items: center; }
.start { width: 35px; height: 35px; margin-left: 269px; }
.search { margin-left: 21px; margin-top: -1px; width: 328px; height: 46px; border-radius: 23px; background: rgba(255,255,255,.82); border: 1px solid #cfc8c4; border-bottom-width: 2px; display: flex; align-items: center; padding-left: 15px; font-size: 19px; color: #5c5c5c; }
.search span { margin-left: 15px; letter-spacing: -.1px; }
.harvest { margin-left: auto; margin-right: 8px; }
.apps { display: flex; margin-left: 9px; gap: 10px; }
.ap { width: 56px; height: 56px; border-radius: 6px; display: grid; place-items: center; position: relative; top: -1px; }
.ap.run::after { content: ""; position: absolute; left: 23.5px; bottom: -1px; width: 9px; height: 5px; border-radius: 3px; background: #87867a; }
.ap.current { background: rgba(255,255,255,.6); box-shadow: 0 0 1px 1px rgba(0,0,0,.06); }
.ap.run.current::after { left: 16px; width: 24px; background: #0078d4; }
.photo { position: absolute; width: 26px; height: 26px; left: 29px; top: 2px; }
.pn, .cnt { position: absolute; color: #fff; font-weight: 400; display: grid; place-items: center; }
.pn { left: 30px; top: 3px; width: 24px; height: 24px; border-radius: 50%; background: #7e57c2; font-size: 14px; }
.cnt { left: 31px; top: 10px; width: 23px; height: 17px; border-radius: 4px; background: #f5383a; font-size: 13px; letter-spacing: -.6px; }
.tray { flex: 1; display: flex; align-items: center; padding-left: 108px; font-size: 17px; margin-top: -2px; }
.up { width: 16px; height: 10px; }
.upd { width: 24px; height: 26px; margin-left: 28px; }
.lang, .clock { display: flex; flex-direction: column; line-height: 24px; text-align: center; white-space: nowrap; letter-spacing: -.3px; }
.lang { width: 50px; margin-left: 20px; line-height: 22px; }
.wifi { width: 24px; height: 18px; margin-left: 20px; }
.vol { width: 24px; height: 18px; margin-left: 12px; }
.bat { width: 25px; height: 20px; margin-left: 12px; }
.clock { width: 110px; text-align: right; margin-left: 7px; font-size: 17.4px; letter-spacing: 0; }
.zz { width: 22px; height: 22px; margin-left: 13px; }
```
